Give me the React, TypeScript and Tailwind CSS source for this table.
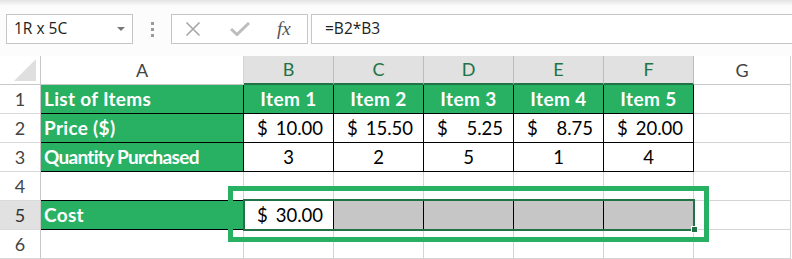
import React from "react";

type Cell = {
  t?: string;
  acct?: [string, string];
  bg?: string;
  bold?: boolean;
  align?: "left" | "center";
  color?: string;
  r?: string;
  b?: string;
  ls?: number;
};

const G = "#28b063";
const GRID = "#d4d4d4";
const BLK = "#000000";

const cols = ["A", "B", "C", "D", "E", "F", "G"];
const widths = [203, 90, 90, 90, 90, 90, 97];

const hdr = (t: string, ls = 0): Cell => ({ t, bg: G, bold: true, align: "left", color: "#fff", r: BLK, b: BLK, ls });
const ihdr = (t: string): Cell => ({ t, bg: G, bold: true, align: "center", color: "#fff", r: BLK, b: BLK, ls: 0.4 });
const money = (a: string): Cell => ({ acct: ["$", a], r: BLK, b: BLK });
const num = (t: string): Cell => ({ t, align: "center", r: BLK, b: BLK });
const empty: Cell = {};

const rows: Cell[][] = [
  [hdr("List of Items", 0.3), ihdr("Item 1"), ihdr("Item 2"), ihdr("Item 3"), ihdr("Item 4"), ihdr("Item 5"), empty],
  [hdr("Price ($)", 0.3), money("10.00"), money("15.50"), money("5.25"), money("8.75"), money("20.00"), empty],
  [hdr("Quantity Purchased", -0.7), num("3"), num("2"), num("5"), num("1"), num("4"), empty],
  [{ b: BLK }, empty, empty, empty, empty, empty, empty],
  [
    hdr("Cost", 0.3),
    { acct: ["$", "30.00"], r: BLK, b: BLK },
    { bg: "#c6c6c6", r: BLK, b: BLK },
    { bg: "#c6c6c6", r: BLK, b: BLK },
    { bg: "#c6c6c6", r: BLK, b: BLK },
    { bg: "#c6c6c6", r: BLK, b: BLK },
    empty,
  ],
  [empty, empty, empty, empty, empty, empty, empty],
];

const cellFont = { fontFamily: "Lato, 'Open Sans', sans-serif" };

function CellView({ c, w }: { c: Cell; w: number }) {
  return (
    <div
      className="h-full shrink-0 flex items-center leading-[24px] border-r border-b overflow-visible whitespace-nowrap"
      style={{
        width: w,
        fontSize: c.bold ? 19 : 18.5,
        letterSpacing: c.ls ? `${c.ls}px` : undefined,
        backgroundColor: c.bg ?? "#ffffff",
        borderRightColor: c.r ?? GRID,
        borderBottomColor: c.b ?? GRID,
        color: c.color ?? "#000",
        fontWeight: c.bold ? 700 : 400,
        justifyContent: c.align === "center" ? "center" : "flex-start",
        ...cellFont,
      }}
    >
      {c.acct ? (
        <div className="flex w-full justify-between pl-[13px] pr-[10px]">
          <span>{c.acct[0]}</span>
          <span>{c.acct[1]}</span>
        </div>
      ) : c.t ? (
        <span className={c.align === "center" ? "" : "pl-[3px]"}>{c.t}</span>
      ) : null}
    </div>
  );
}

export default function App() {
  return (
    <div className="relative w-[792px] h-[259px] overflow-hidden bg-white" style={{ fontFamily: "'Open Sans', sans-serif" }}>
      {/* Toolbar */}
      <div className="h-[56px] bg-[#fcfcfc] flex flex-col">
        <div className="h-[6px] bg-gradient-to-b from-[#e3e3e3] to-[#fcfcfc]" />
        <div className="mt-[8px] h-[30px] flex items-stretch">
          <div className="ml-[6px] w-[127px] border border-[#c6c6c6] bg-white flex items-center justify-between pl-[7px] pr-[7px]">
            <span className="text-[15.5px] text-[#222]" style={{ fontFamily: "'Open Sans', sans-serif" }}>1R x 5C</span>
            <svg width="8" height="5" viewBox="0 0 8 5"><path d="M0 0 L8 0 L4 4 Z" fill="#777" /></svg>
          </div>
          <div className="w-[38px] flex flex-col items-center justify-center gap-[3px]">
            <div className="w-[3px] h-[3px] bg-[#9a9a9a]" />
            <div className="w-[3px] h-[3px] bg-[#9a9a9a]" />
            <div className="w-[3px] h-[3px] bg-[#9a9a9a]" />
          </div>
          <div className="w-[137px] border border-[#c6c6c6] bg-white flex items-center">
            <svg className="ml-[13px]" width="16" height="16" viewBox="0 0 16 16">
              <path d="M1.5 1.5 L14.5 14.5 M14.5 1.5 L1.5 14.5" stroke="#a6a6a6" strokeWidth="1.6" fill="none" />
            </svg>
            <svg className="ml-[29px]" width="20" height="14" viewBox="0 0 20 14">
              <path d="M1 7 L7 12.5 L19 1" stroke="#bdbdbd" strokeWidth="3" fill="none" />
            </svg>
            <span className="ml-[27px] text-[19px] italic text-[#555]" style={{ fontFamily: "'Liberation Serif', serif" }}>fx</span>
          </div>
          <div className="ml-[3px] flex-1 border-t border-b border-l border-[#c6c6c6] bg-white flex items-center pl-[13px]">
            <span className="text-[15.5px] text-[#222]" style={{ fontFamily: "'Open Sans', sans-serif" }}>=B2*B3</span>
          </div>
        </div>
      </div>

      {/* Grid */}
      <div className="flex flex-col">
        {/* Column header row */}
        <div className="flex h-[29px]">
          <div className="w-[41px] shrink-0 border-r border-b border-[#c8c8c8] bg-white relative">
            <svg className="absolute left-[14px] top-[3px]" width="22" height="22" viewBox="0 0 22 22">
              <polygon points="22,0 22,22 0,22" fill="#dfdfdf" />
            </svg>
          </div>
          {cols.map((c, i) => {
            const sel = i >= 1 && i <= 5;
            return (
              <div
                key={c}
                className={
                  "shrink-0 flex items-center justify-center text-[18px] border-r " +
                  (sel
                    ? "bg-[#e1e1e1] text-[#217346] border-b-2 border-b-[#217346] border-r-[#bdbdbd]"
                    : "bg-white text-[#444] border-b border-b-[#c8c8c8] border-r-[#d4d4d4]")
                }
                style={{ width: widths[i], ...cellFont }}
              >
                {c}
              </div>
            );
          })}
        </div>
        {rows.map((row, ri) => (
          <div key={ri} className="flex h-[29px]">
            <div
              className={
                "w-[41px] shrink-0 flex items-center justify-center text-[18px] border-r border-r-[#c8c8c8] border-b border-b-[#dadada] " +
                (ri === 4 ? "bg-[#e1e1e1] text-[#333]" : "bg-white text-[#444]")
              }
              style={cellFont}
            >
              {ri + 1}
            </div>
            {row.map((c, ci) => (
              <CellView key={ci} c={c} w={widths[ci]} />
            ))}
          </div>
        ))}
      </div>

      {/* Selection border */}
      <div className="absolute left-[243px] top-[199px] w-[452px] h-[32px] border-2 border-[#217346]" />
      <div className="absolute left-[691px] top-[226px] w-[7px] h-[7px] bg-[#217346] border border-white" />
      {/* Highlight outline */}
      <div className="absolute left-[228px] top-[186px] w-[481px] h-[56px] border-[5px] border-[#28b063]" />
    </div>
  );
}
